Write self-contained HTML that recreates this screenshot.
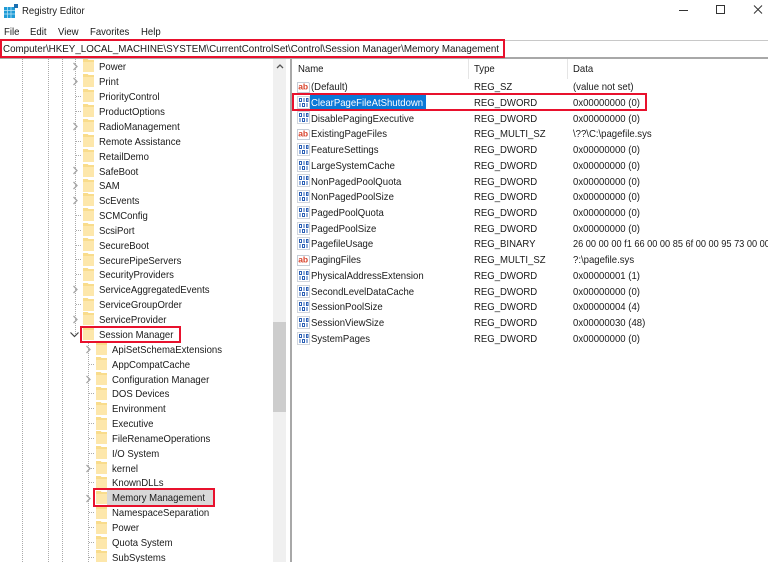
<!DOCTYPE html>
<html><head><meta charset="utf-8"><style>
html,body{margin:0;padding:0;background:#fff}
#p{position:relative;width:768px;height:562px;overflow:hidden;background:#fff;font:10.4px/16px "Liberation Sans",sans-serif;color:#1a1a1a}
#p div,#p svg{position:absolute}
.t{white-space:nowrap;margin-top:2px;transform:scaleX(.92);transform-origin:0 0}
.l1{left:99px}.l2{left:112px}
.n{left:311px}.y{left:474px}.v{left:573px}
.f1{left:83px;width:11px;height:13px}
.f2{left:96px;width:11px;height:13px}
.c1{left:72px;width:7px;height:9px}
.c2{left:85px;width:7px;height:9px}
.i{left:297px;width:13px;height:13px}
.r{background:none;border:2.5px solid #e8112d;box-sizing:border-box}
.dv{width:0;border-left:1px dotted #aaa}
.dh{height:0;border-top:1px dotted #aaa;width:5px}
</style></head><body><div id="p">
<svg width="0" height="0" style="width:0;height:0"><defs>
<symbol id="fo" viewBox="0 0 14 13" preserveAspectRatio="none"><path d="M0 0h6l1 1h7v12H0z" fill="#f9dc8c"/><path d="M0 3h14V13H0z" fill="#fde7ab"/></symbol>
<symbol id="ch" viewBox="0 0 7 9"><path d="M1.500 1l3.500 3.500-3.500 3.500" fill="none" stroke="#a6a6a6" stroke-width="1.300"/></symbol>
<symbol id="ab" viewBox="0 0 13 13"><path d="M.5 2.500h11l1 1v9H.5z" fill="#fff" stroke="#c5ccd6"/><text x="1.200" y="9.500" font-family="Liberation Sans" font-size="8.500" font-weight="bold" fill="#d8432c">ab</text></symbol>
<symbol id="bi" viewBox="0 0 13 13"><path d="M.5.500h12v12H.5z" fill="#fff" stroke="#d0d5dc"/><path d="M2.500 2.500h2v3h-2zM7 2v4M9.500 2.500h1.500v3H9.500zM3 7v4M5.500 7.500h2v3h-2zM10 7v4" fill="none" stroke="#2a5fb5"/></symbol>
</defs></svg>

<!-- title -->
<svg style="left:4px;top:4px;width:14px;height:15px" viewBox="0 0 14 15"><path d="M0 3h11v11H0z" fill="#1f9bd6"/><path d="M3.500 3v11M7 3v11M0 6.500h11M0 10h11" stroke="#bfe6f7" stroke-width=".7"/><path d="M10 0h4v4h-4z" fill="#1b6fb0"/></svg>
<div class="t" style="left:22px;top:2px;color:#222">Registry Editor</div>
<svg style="left:679px;top:4px;width:84px;height:12px" viewBox="0 0 84 12"><path d="M0 6.500h9" stroke="#333"/><path d="M37.500 1.500h8v8h-8z" fill="none" stroke="#333"/><path d="M75 1.500l8 8M83 1.500l-8 8" stroke="#333" fill="none"/></svg>

<!-- menu -->
<div class="t" style="left:4px;top:23px">File</div>
<div class="t" style="left:30px;top:23px">Edit</div>
<div class="t" style="left:58px;top:23px">View</div>
<div class="t" style="left:90px;top:23px">Favorites</div>
<div class="t" style="left:141px;top:23px">Help</div>

<!-- address -->
<div style="left:0;top:40px;width:768px;height:1px;background:#c8c8c8"></div>
<div style="left:0;top:57px;width:768px;height:2px;background:#a8a8a8"></div>
<div class="t" style="left:3px;top:39px;font-size:10.5px;transform:scaleX(.932)">Computer\HKEY_LOCAL_MACHINE\SYSTEM\CurrentControlSet\Control\Session Manager\Memory Management</div>
<div class="r" style="left:0;top:39px;width:505px;height:19px"></div>

<!-- tree guides -->
<div class="dv" style="left:22px;top:59px;height:503px"></div>
<div class="dv" style="left:48px;top:59px;height:503px"></div>
<div class="dv" style="left:62px;top:59px;height:503px"></div>
<div class="dv" style="left:75px;top:59px;height:275px"></div>
<div class="dv" style="left:88px;top:342px;height:220px"></div>
<div class="dh" style="left:76px;top:96px"></div><div class="dh" style="left:76px;top:111px"></div><div class="dh" style="left:76px;top:141px"></div><div class="dh" style="left:76px;top:155px"></div><div class="dh" style="left:76px;top:215px"></div><div class="dh" style="left:76px;top:230px"></div><div class="dh" style="left:76px;top:245px"></div><div class="dh" style="left:76px;top:259px"></div><div class="dh" style="left:76px;top:274px"></div><div class="dh" style="left:76px;top:304px"></div>
<div class="dh" style="left:89px;top:364px"></div><div class="dh" style="left:89px;top:393px"></div><div class="dh" style="left:89px;top:408px"></div><div class="dh" style="left:89px;top:423px"></div><div class="dh" style="left:89px;top:438px"></div><div class="dh" style="left:89px;top:453px"></div><div class="dh" style="left:89px;top:468px"></div><div class="dh" style="left:89px;top:482px"></div><div class="dh" style="left:89px;top:512px"></div><div class="dh" style="left:89px;top:527px"></div><div class="dh" style="left:89px;top:542px"></div><div class="dh" style="left:89px;top:557px"></div>

<!-- tree highlight -->
<div style="left:107px;top:490px;width:107px;height:15px;background:#d9d9d9"></div>

<!-- tree folders -->
<svg class="f1" style="top:59px"><use href="#fo"/></svg><svg class="f1" style="top:74px"><use href="#fo"/></svg><svg class="f1" style="top:89px"><use href="#fo"/></svg><svg class="f1" style="top:104px"><use href="#fo"/></svg><svg class="f1" style="top:119px"><use href="#fo"/></svg><svg class="f1" style="top:134px"><use href="#fo"/></svg><svg class="f1" style="top:149px"><use href="#fo"/></svg><svg class="f1" style="top:164px"><use href="#fo"/></svg><svg class="f1" style="top:179px"><use href="#fo"/></svg><svg class="f1" style="top:193px"><use href="#fo"/></svg><svg class="f1" style="top:208px"><use href="#fo"/></svg><svg class="f1" style="top:223px"><use href="#fo"/></svg><svg class="f1" style="top:238px"><use href="#fo"/></svg><svg class="f1" style="top:253px"><use href="#fo"/></svg><svg class="f1" style="top:268px"><use href="#fo"/></svg><svg class="f1" style="top:283px"><use href="#fo"/></svg><svg class="f1" style="top:298px"><use href="#fo"/></svg><svg class="f1" style="top:312px"><use href="#fo"/></svg><svg class="f1" style="top:327px"><use href="#fo"/></svg>
<svg class="f2" style="top:342px"><use href="#fo"/></svg><svg class="f2" style="top:357px"><use href="#fo"/></svg><svg class="f2" style="top:372px"><use href="#fo"/></svg><svg class="f2" style="top:387px"><use href="#fo"/></svg><svg class="f2" style="top:402px"><use href="#fo"/></svg><svg class="f2" style="top:417px"><use href="#fo"/></svg><svg class="f2" style="top:431px"><use href="#fo"/></svg><svg class="f2" style="top:446px"><use href="#fo"/></svg><svg class="f2" style="top:461px"><use href="#fo"/></svg><svg class="f2" style="top:476px"><use href="#fo"/></svg><svg class="f2" style="top:491px"><use href="#fo"/></svg><svg class="f2" style="top:506px"><use href="#fo"/></svg><svg class="f2" style="top:521px"><use href="#fo"/></svg><svg class="f2" style="top:536px"><use href="#fo"/></svg><svg class="f2" style="top:550px"><use href="#fo"/></svg>

<!-- chevrons -->
<svg class="c1" style="top:62px"><use href="#ch"/></svg><svg class="c1" style="top:77px"><use href="#ch"/></svg><svg class="c1" style="top:122px"><use href="#ch"/></svg><svg class="c1" style="top:166px"><use href="#ch"/></svg><svg class="c1" style="top:181px"><use href="#ch"/></svg><svg class="c1" style="top:196px"><use href="#ch"/></svg><svg class="c1" style="top:285px"><use href="#ch"/></svg><svg class="c1" style="top:315px"><use href="#ch"/></svg>
<svg style="left:70px;top:331px;width:9px;height:7px" viewBox="0 0 9 7"><path d="M.5 1.500l4 4 4-4" fill="none" stroke="#444" stroke-width="1.200"/></svg>
<svg class="c2" style="top:345px"><use href="#ch"/></svg><svg class="c2" style="top:375px"><use href="#ch"/></svg><svg class="c2" style="top:464px"><use href="#ch"/></svg><svg class="c2" style="top:494px"><use href="#ch"/></svg>

<!-- tree text -->
<div class="t l1" style="top:58px">Power</div>
<div class="t l1" style="top:73px">Print</div>
<div class="t l1" style="top:88px">PriorityControl</div>
<div class="t l1" style="top:103px">ProductOptions</div>
<div class="t l1" style="top:118px">RadioManagement</div>
<div class="t l1" style="top:133px">Remote Assistance</div>
<div class="t l1" style="top:148px">RetailDemo</div>
<div class="t l1" style="top:163px">SafeBoot</div>
<div class="t l1" style="top:177px">SAM</div>
<div class="t l1" style="top:192px">ScEvents</div>
<div class="t l1" style="top:207px">SCMConfig</div>
<div class="t l1" style="top:222px">ScsiPort</div>
<div class="t l1" style="top:237px">SecureBoot</div>
<div class="t l1" style="top:252px">SecurePipeServers</div>
<div class="t l1" style="top:266px">SecurityProviders</div>
<div class="t l1" style="top:281px">ServiceAggregatedEvents</div>
<div class="t l1" style="top:296px">ServiceGroupOrder</div>
<div class="t l1" style="top:311px">ServiceProvider</div>
<div class="t l1" style="top:326px">Session Manager</div>
<div class="t l2" style="top:341px">ApiSetSchemaExtensions</div>
<div class="t l2" style="top:356px">AppCompatCache</div>
<div class="t l2" style="top:371px">Configuration Manager</div>
<div class="t l2" style="top:385px">DOS Devices</div>
<div class="t l2" style="top:400px">Environment</div>
<div class="t l2" style="top:415px">Executive</div>
<div class="t l2" style="top:430px">FileRenameOperations</div>
<div class="t l2" style="top:445px">I/O System</div>
<div class="t l2" style="top:460px">kernel</div>
<div class="t l2" style="top:474px">KnownDLLs</div>
<div class="t l2" style="top:489px">Memory Management</div>
<div class="t l2" style="top:504px">NamespaceSeparation</div>
<div class="t l2" style="top:519px">Power</div>
<div class="t l2" style="top:534px">Quota System</div>
<div class="t l2" style="top:549px">SubSystems</div>

<div class="r" style="left:80px;top:326px;width:101px;height:17px"></div>
<div class="r" style="left:93px;top:488px;width:122px;height:19px"></div>

<!-- scrollbar -->
<div style="left:273px;top:59px;width:13px;height:503px;background:#f0f0f0"></div>
<div style="left:273px;top:322px;width:13px;height:90px;background:#cdcdcd"></div>
<svg style="left:276px;top:63px;width:8px;height:6px" viewBox="0 0 8 6"><path d="M1 5l3-3 3 3" fill="none" stroke="#555" stroke-width="1.300"/></svg>
<div style="left:290px;top:59px;width:2px;height:503px;background:#a8a8a8"></div>

<!-- list header -->
<div class="t" style="left:298px;top:60px">Name</div>
<div class="t" style="left:474px;top:60px">Type</div>
<div class="t" style="left:573px;top:60px">Data</div>
<div style="left:468px;top:59px;width:1px;height:20px;background:#e5e5e5"></div>
<div style="left:567px;top:59px;width:1px;height:20px;background:#e5e5e5"></div>

<!-- selected -->
<div style="left:310px;top:95px;width:116px;height:15px;background:#0a78d7"></div>

<!-- list icons -->
<svg class="i" style="top:80px"><use href="#ab"/></svg><svg class="i" style="top:96px"><use href="#bi"/></svg><svg class="i" style="top:111px"><use href="#bi"/></svg><svg class="i" style="top:127px"><use href="#ab"/></svg><svg class="i" style="top:143px"><use href="#bi"/></svg><svg class="i" style="top:159px"><use href="#bi"/></svg><svg class="i" style="top:174px"><use href="#bi"/></svg><svg class="i" style="top:190px"><use href="#bi"/></svg><svg class="i" style="top:206px"><use href="#bi"/></svg><svg class="i" style="top:222px"><use href="#bi"/></svg><svg class="i" style="top:237px"><use href="#bi"/></svg><svg class="i" style="top:253px"><use href="#ab"/></svg><svg class="i" style="top:269px"><use href="#bi"/></svg><svg class="i" style="top:285px"><use href="#bi"/></svg><svg class="i" style="top:300px"><use href="#bi"/></svg><svg class="i" style="top:316px"><use href="#bi"/></svg><svg class="i" style="top:332px"><use href="#bi"/></svg>

<!-- list rows -->
<div class="t n" style="top:78px">(Default)</div><div class="t y" style="top:78px">REG_SZ</div><div class="t v" style="top:78px">(value not set)</div>
<div class="t n" style="top:94px;color:#fff">ClearPageFileAtShutdown</div><div class="t y" style="top:94px">REG_DWORD</div><div class="t v" style="top:94px">0x00000000 (0)</div>
<div class="t n" style="top:110px">DisablePagingExecutive</div><div class="t y" style="top:110px">REG_DWORD</div><div class="t v" style="top:110px">0x00000000 (0)</div>
<div class="t n" style="top:125px">ExistingPageFiles</div><div class="t y" style="top:125px">REG_MULTI_SZ</div><div class="t v" style="top:125px">\??\C:\pagefile.sys</div>
<div class="t n" style="top:141px">FeatureSettings</div><div class="t y" style="top:141px">REG_DWORD</div><div class="t v" style="top:141px">0x00000000 (0)</div>
<div class="t n" style="top:157px">LargeSystemCache</div><div class="t y" style="top:157px">REG_DWORD</div><div class="t v" style="top:157px">0x00000000 (0)</div>
<div class="t n" style="top:173px">NonPagedPoolQuota</div><div class="t y" style="top:173px">REG_DWORD</div><div class="t v" style="top:173px">0x00000000 (0)</div>
<div class="t n" style="top:188px">NonPagedPoolSize</div><div class="t y" style="top:188px">REG_DWORD</div><div class="t v" style="top:188px">0x00000000 (0)</div>
<div class="t n" style="top:204px">PagedPoolQuota</div><div class="t y" style="top:204px">REG_DWORD</div><div class="t v" style="top:204px">0x00000000 (0)</div>
<div class="t n" style="top:220px">PagedPoolSize</div><div class="t y" style="top:220px">REG_DWORD</div><div class="t v" style="top:220px">0x00000000 (0)</div>
<div class="t n" style="top:235px">PagefileUsage</div><div class="t y" style="top:235px">REG_BINARY</div><div class="t v" style="top:235px;transform:scaleX(.885)">26 00 00 00 f1 66 00 00 85 6f 00 00 95 73 00 00</div>
<div class="t n" style="top:251px">PagingFiles</div><div class="t y" style="top:251px">REG_MULTI_SZ</div><div class="t v" style="top:251px">?:\pagefile.sys</div>
<div class="t n" style="top:267px">PhysicalAddressExtension</div><div class="t y" style="top:267px">REG_DWORD</div><div class="t v" style="top:267px">0x00000001 (1)</div>
<div class="t n" style="top:283px">SecondLevelDataCache</div><div class="t y" style="top:283px">REG_DWORD</div><div class="t v" style="top:283px">0x00000000 (0)</div>
<div class="t n" style="top:298px">SessionPoolSize</div><div class="t y" style="top:298px">REG_DWORD</div><div class="t v" style="top:298px">0x00000004 (4)</div>
<div class="t n" style="top:314px">SessionViewSize</div><div class="t y" style="top:314px">REG_DWORD</div><div class="t v" style="top:314px">0x00000030 (48)</div>
<div class="t n" style="top:330px">SystemPages</div><div class="t y" style="top:330px">REG_DWORD</div><div class="t v" style="top:330px">0x00000000 (0)</div>

<div class="r" style="left:292px;top:93px;width:355px;height:18px"></div>
</div></body></html>
